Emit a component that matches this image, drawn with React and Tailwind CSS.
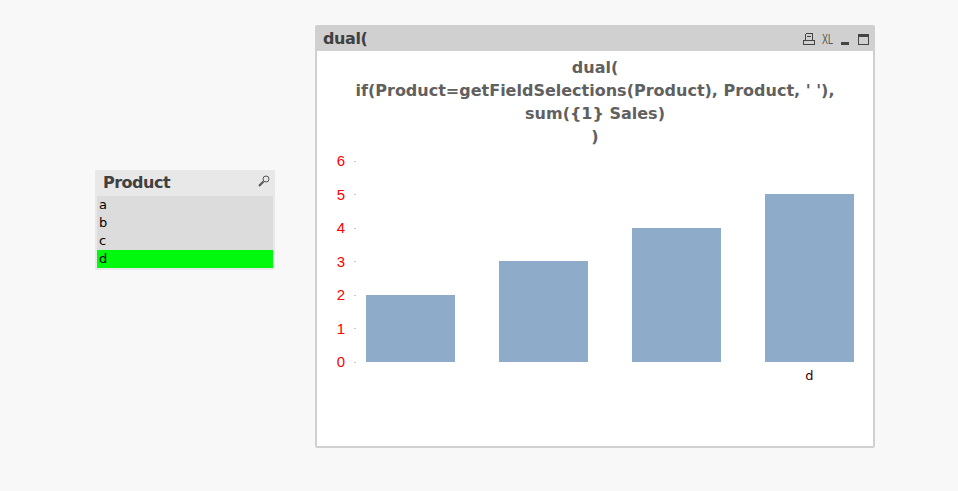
const listItems = [
  { label: 'a', cls: 'bg-[#dcdcdc]' },
  { label: 'b', cls: 'bg-[#dcdcdc]' },
  { label: 'c', cls: 'bg-[#dcdcdc]' },
  { label: 'd', cls: 'bg-[#00f90c]' },
];

const bars = [
  { h: 'h-[67px]', label: '' },
  { h: 'h-[101px]', label: '' },
  { h: 'h-[134px]', label: '' },
  { h: 'h-[168px]', label: 'd' },
];

const yLabels = ['6', '5', '4', '3', '2', '1', '0'];

const SearchIcon = () => (
  <svg width="12" height="12" viewBox="0 0 12 12" fill="none" stroke="#555">
    <circle cx="8" cy="4" r="3" strokeWidth="1" />
    <path d="M5.5 6.5 L1 11" strokeWidth="2" />
  </svg>
);

const PrintIcon = () => (
  <svg width="12" height="12" viewBox="0 0 12 12" fill="none" stroke="#444" strokeWidth="1" shapeRendering="crispEdges">
    <path d="M2.5 .5 H9.5 V7.5 M2.5 .5 V7.5" />
    <path d="M4 3.5 H8" />
    <path d="M.5 7.5 H11.5 V11.5 H.5 Z" />
  </svg>
);

const App = () => {
  return (
    <div className="relative w-[958px] h-[491px] overflow-hidden bg-[#f8f8f8] font-['DejaVu_Sans',sans-serif]">
      {/* list box */}
      <div className="absolute left-[95px] top-[170px] w-[180px] h-[100px] bg-[#e8e8e8] rounded-[2px] px-[2px] flex flex-col">
        <div className="h-[26px] flex items-center justify-between pl-[6px] pr-[3px] shrink-0">
          <span className="text-[16px] font-bold text-[#404040] tracking-[-0.5px]">Product</span>
          <div className="-mt-[4px]">
            <SearchIcon />
          </div>
        </div>
        {listItems.map((item) => (
          <div key={item.label} className={`h-[18px] pl-[2px] text-[13px] leading-[18px] text-black ${item.cls}`}>
            {item.label}
          </div>
        ))}
      </div>

      {/* chart */}
      <div className="absolute left-[315px] top-[25px] w-[560px] h-[423px] bg-white border-2 border-[#d0d0d0] rounded-[2px] flex flex-col">
        <div className="h-[24px] bg-[#d0d0d0] flex items-center justify-between pl-[6px] pr-[4px] shrink-0">
          <span className="text-[16px] font-bold text-[#404040] leading-[24px] tracking-[-0.4px]">dual(</span>
          <div className="flex items-center gap-[7px]">
            <PrintIcon />
            <span className="text-[15px] font-['Liberation_Sans',sans-serif] text-[#555] w-[11px] leading-[12px] scale-x-[0.6] origin-left">XL</span>
            <div className="w-[8px] h-[3px] bg-[#444] mt-[8px] ml-[1px]" />
            <div className="w-[11px] h-[11px] border border-[#444] border-t-[3px] ml-[2px]" />
          </div>
        </div>

        <div className="pt-[5px] h-[103px] text-center text-[16px] leading-[23px] font-bold text-[#606060] shrink-0">
          <div>dual(</div>
          <div>if(Product=getFieldSelections(Product), Product, ' '),</div>
          <div>sum({'{1}'} Sales)</div>
          <div>)</div>
        </div>

        <div className="flex">
          <div className="w-[40px] h-[215px] flex flex-col justify-between shrink-0 pl-[19px]">
            {yLabels.map((n) => (
              <div key={n} className="h-[14px] flex items-center">
                <span className="w-[9px] text-right font-['Liberation_Sans',sans-serif] text-[15px] leading-[14px] text-[#ff0000]">{n}</span>
                <span className="w-[2px] h-px bg-[#c8c8c8] ml-[9px]" />
              </div>
            ))}
          </div>
          <div className="flex gap-[44px] ml-[8px] pl-px">
            {bars.map((bar, i) => (
              <div key={i} className="w-[89px] flex flex-col">
                <div className="h-[208px] flex items-end">
                  <div className={`w-full bg-[#8fabca] ${bar.h}`} />
                </div>
                <div className="h-[26px] pt-px text-center text-[13px] leading-[26px] text-[#3a0000]">{bar.label}</div>
              </div>
            ))}
          </div>
        </div>
      </div>
    </div>
  );
};

export default App;
